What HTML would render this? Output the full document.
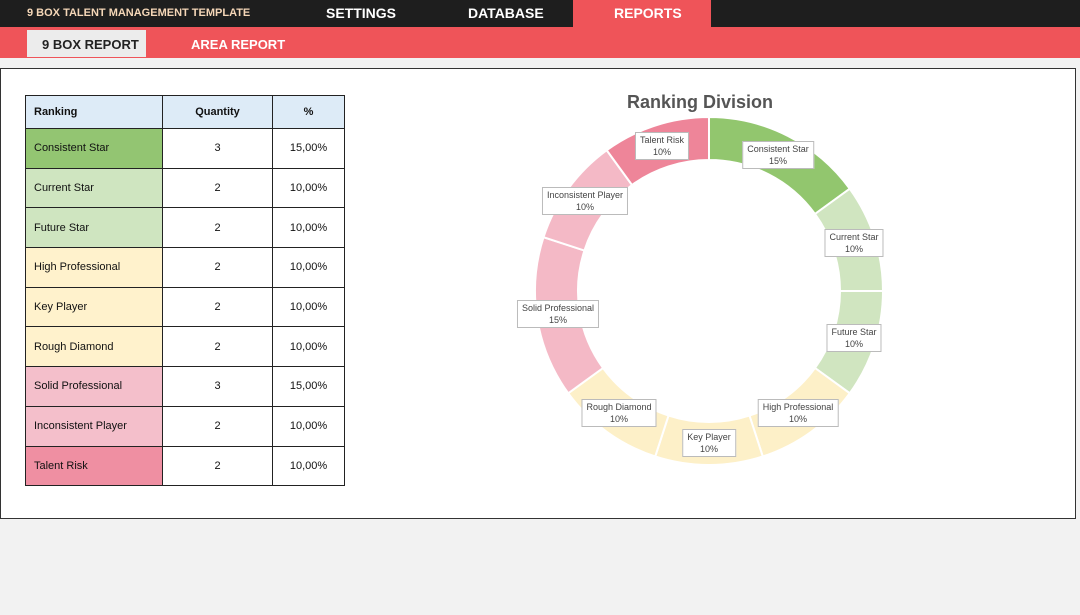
<!DOCTYPE html>
<html><head><meta charset="utf-8"><style>
*{margin:0;padding:0;box-sizing:border-box}
body{width:1080px;height:615px;background:#f2f2f2;font-family:"Liberation Sans",sans-serif;position:relative;overflow:hidden}
.top{position:absolute;left:0;top:0;width:1080px;height:27px;background:#1e1e1e}
.t{position:absolute;font-weight:bold;color:#fff;font-size:14px;top:5px}
.red{position:absolute;left:0;top:27px;width:1080px;height:31px;background:#ef5459}
.main{position:absolute;left:0;top:68px;width:1076px;height:451px;background:#fff;border:1px solid #333}
table{position:absolute;left:25px;top:95px;border-collapse:collapse;font-size:11px;color:#111}
td{border:1px solid #222;height:39.7px;padding:0 8px}
tr.h td{height:33px}
td.n{text-align:center}
.lbl{position:absolute;background:#fff;border:1px solid #bbb;font-size:9px;color:#444;text-align:center;line-height:12px;padding:1px 4px;transform:translate(-50%,-50%);white-space:nowrap}
</style></head><body>
<div class="top"></div>
<div class="t" style="left:27px;top:7px;font-size:11px;color:#f5d7b8">9 BOX TALENT MANAGEMENT TEMPLATE</div>
<div class="t" style="left:326px">SETTINGS</div>
<div class="t" style="left:468px">DATABASE</div>
<div style="position:absolute;left:573px;top:0;width:138px;height:27px;background:#ef5459"></div>
<div class="t" style="left:614px">REPORTS</div>
<div class="red"></div>
<div style="position:absolute;left:27px;top:30px;width:119px;height:27px;background:#ececec"></div>
<div class="t" style="left:42px;top:37px;color:#222;font-size:13px">9 BOX REPORT</div>
<div class="t" style="left:191px;top:37px;font-size:13px">AREA REPORT</div>
<div class="main"></div>
<table>
<tr class="h" style="background:#ddebf7;font-weight:bold"><td style="width:137px">Ranking</td><td class="n" style="width:110px">Quantity</td><td class="n" style="width:72px">%</td></tr>
<tr><td style="background:#93c572">Consistent Star</td><td class="n">3</td><td class="n">15,00%</td></tr>
<tr><td style="background:#cfe5c0">Current Star</td><td class="n">2</td><td class="n">10,00%</td></tr>
<tr><td style="background:#cfe5c0">Future Star</td><td class="n">2</td><td class="n">10,00%</td></tr>
<tr><td style="background:#fff2cc">High Professional</td><td class="n">2</td><td class="n">10,00%</td></tr>
<tr><td style="background:#fff2cc">Key Player</td><td class="n">2</td><td class="n">10,00%</td></tr>
<tr><td style="background:#fff2cc">Rough Diamond</td><td class="n">2</td><td class="n">10,00%</td></tr>
<tr><td style="background:#f4bfcb">Solid Professional</td><td class="n">3</td><td class="n">15,00%</td></tr>
<tr><td style="background:#f4bfcb">Inconsistent Player</td><td class="n">2</td><td class="n">10,00%</td></tr>
<tr><td style="background:#ef8fa2">Talent Risk</td><td class="n">2</td><td class="n">10,00%</td></tr>
</table>
<div style="position:absolute;left:600px;top:92px;width:200px;text-align:center;font-weight:bold;font-size:18px;color:#555">Ranking Division</div>
<svg id="d" style="position:absolute;left:0;top:0" width="1080" height="615"></svg>
<script>
var cx=709,cy=291,R=174,r=131,segs=[[15,'#92c66e'],[10,'#d0e5c0'],[10,'#d0e5c0'],[10,'#fdf0c8'],[10,'#fdf0c8'],[10,'#fdf0c8'],[15,'#f4b9c6'],[10,'#f4b9c6'],[10,'#ee8599']],a=0,s='';
function p(rr,ang){var t=ang*Math.PI/180;return (cx+rr*Math.sin(t)).toFixed(2)+' '+(cy-rr*Math.cos(t)).toFixed(2)}
segs.forEach(function(g){var b=a+g[0]*3.6;s+='<path d="M'+p(R,a)+' A'+R+' '+R+' 0 0 1 '+p(R,b)+' L'+p(r,b)+' A'+r+' '+r+' 0 0 0 '+p(r,a)+' Z" fill="'+g[1]+'" stroke="#fff" stroke-width="2"/>';a=b});
document.getElementById('d').innerHTML=s;
</script>
<div class="lbl" style="left:662px;top:146px">Talent Risk<br>10%</div>
<div class="lbl" style="left:778px;top:155px">Consistent Star<br>15%</div>
<div class="lbl" style="left:585px;top:201px">Inconsistent Player<br>10%</div>
<div class="lbl" style="left:854px;top:243px">Current Star<br>10%</div>
<div class="lbl" style="left:558px;top:314px">Solid Professional<br>15%</div>
<div class="lbl" style="left:854px;top:338px">Future Star<br>10%</div>
<div class="lbl" style="left:619px;top:413px">Rough Diamond<br>10%</div>
<div class="lbl" style="left:798px;top:413px">High Professional<br>10%</div>
<div class="lbl" style="left:709px;top:443px">Key Player<br>10%</div>
</body></html>
